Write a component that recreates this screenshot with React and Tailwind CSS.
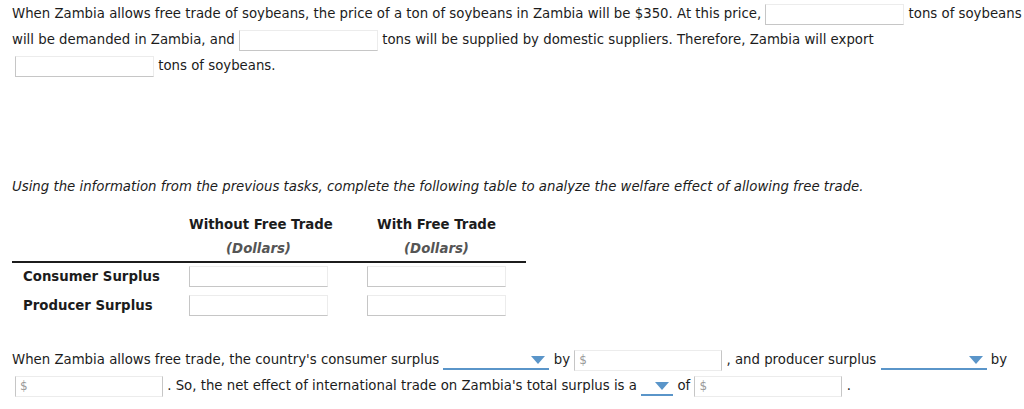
import React from 'react';

function Blank({ className = '' }) {
  return (
    <span
      className={`inline-block align-middle w-[139px] h-[21px] bg-white border border-t-[#ececec] border-r-[#ececec] border-b-[#c6c6c6] border-l-[#c6c6c6] ${className}`}
    />
  );
}

function Money({ className = '' }) {
  return (
    <span
      className={`inline-flex items-center align-middle w-[148px] h-[21px] bg-white border border-t-[#ececec] border-r-[#c6c6c6] border-b-[#ececec] border-l-[#c6c6c6] pl-[4px] text-[12px] text-[#9a9a9a] ${className}`}
    >
      $
    </span>
  );
}

function Dropdown({ width }) {
  return (
    <span
      className={`relative inline-block align-middle h-[20px] border-b-2 border-[#5a95c9] ${width}`}
    >
      <svg
        className="absolute right-[4px] top-[6px]"
        width="14"
        height="8"
        viewBox="0 0 14 8"
      >
        <path d="M0 0 L14 0 L7 8 Z" fill="#5a95c9" />
      </svg>
    </span>
  );
}

export default function App() {
  return (
    <div
      className="w-[1024px] h-[409px] bg-white text-[#1c1c1c] text-[13.3px] overflow-hidden"
      style={{ fontFamily: 'Verdana, "DejaVu Sans", sans-serif' }}
    >
      {/* Exports question */}
      <div className="pt-[1px] pl-[12px] leading-[26px] whitespace-nowrap">
        <div>
          When Zambia allows free trade of soybeans, the price of a ton of soybeans in Zambia will be $350. At this price,{' '}
          <Blank /> tons of soybeans
        </div>
        <div>
          will be demanded in Zambia, and <Blank /> tons will be supplied by domestic suppliers. Therefore, Zambia will export
        </div>
        <div className="pl-[3px]">
          <Blank /> tons of soybeans.
        </div>
      </div>

      {/* Welfare table */}
      <div className="mt-[95px] pl-[12px]">
        <p className="italic leading-[26px]">
          Using the information from the previous tasks, complete the following table to analyze the welfare effect of allowing free trade.
        </p>

        <div className="mt-[13px] w-[514px]">
          <div className="grid grid-cols-[177px_178px_159px] border-b-2 border-[#1c1c1c]">
            <div />
            <div className="w-[139px] text-center font-bold leading-[24px] whitespace-nowrap">
              <div>Without Free Trade</div>
              <div className="italic text-[#555]">(Dollars)</div>
            </div>
            <div className="w-[139px] text-center font-bold leading-[24px] whitespace-nowrap">
              <div>With Free Trade</div>
              <div className="italic text-[#555]">(Dollars)</div>
            </div>
          </div>
          <div className="grid grid-cols-[177px_178px_159px] items-center h-[27px]">
            <div className="pl-[11px] font-bold">Consumer Surplus</div>
            <Blank />
            <Blank />
          </div>
          <div className="grid grid-cols-[177px_178px_159px] items-center h-[31px]">
            <div className="pl-[11px] font-bold">Producer Surplus</div>
            <Blank />
            <Blank />
          </div>
        </div>
      </div>

      {/* Summary sentence */}
      <div className="mt-[26px] pl-[12px] leading-[26px] whitespace-nowrap">
        <div>
          When Zambia allows free trade, the country's consumer surplus <Dropdown width="w-[106px]" /> by <Money />{' '}
          , and producer surplus <Dropdown width="w-[106px]" /> by
        </div>
        <div className="pl-[3px]">
          <Money /> . So, the net effect of international trade on Zambia's total surplus is a{' '}
          <Dropdown width="w-[32px]" /> of <Money /> .
        </div>
      </div>
    </div>
  );
}
